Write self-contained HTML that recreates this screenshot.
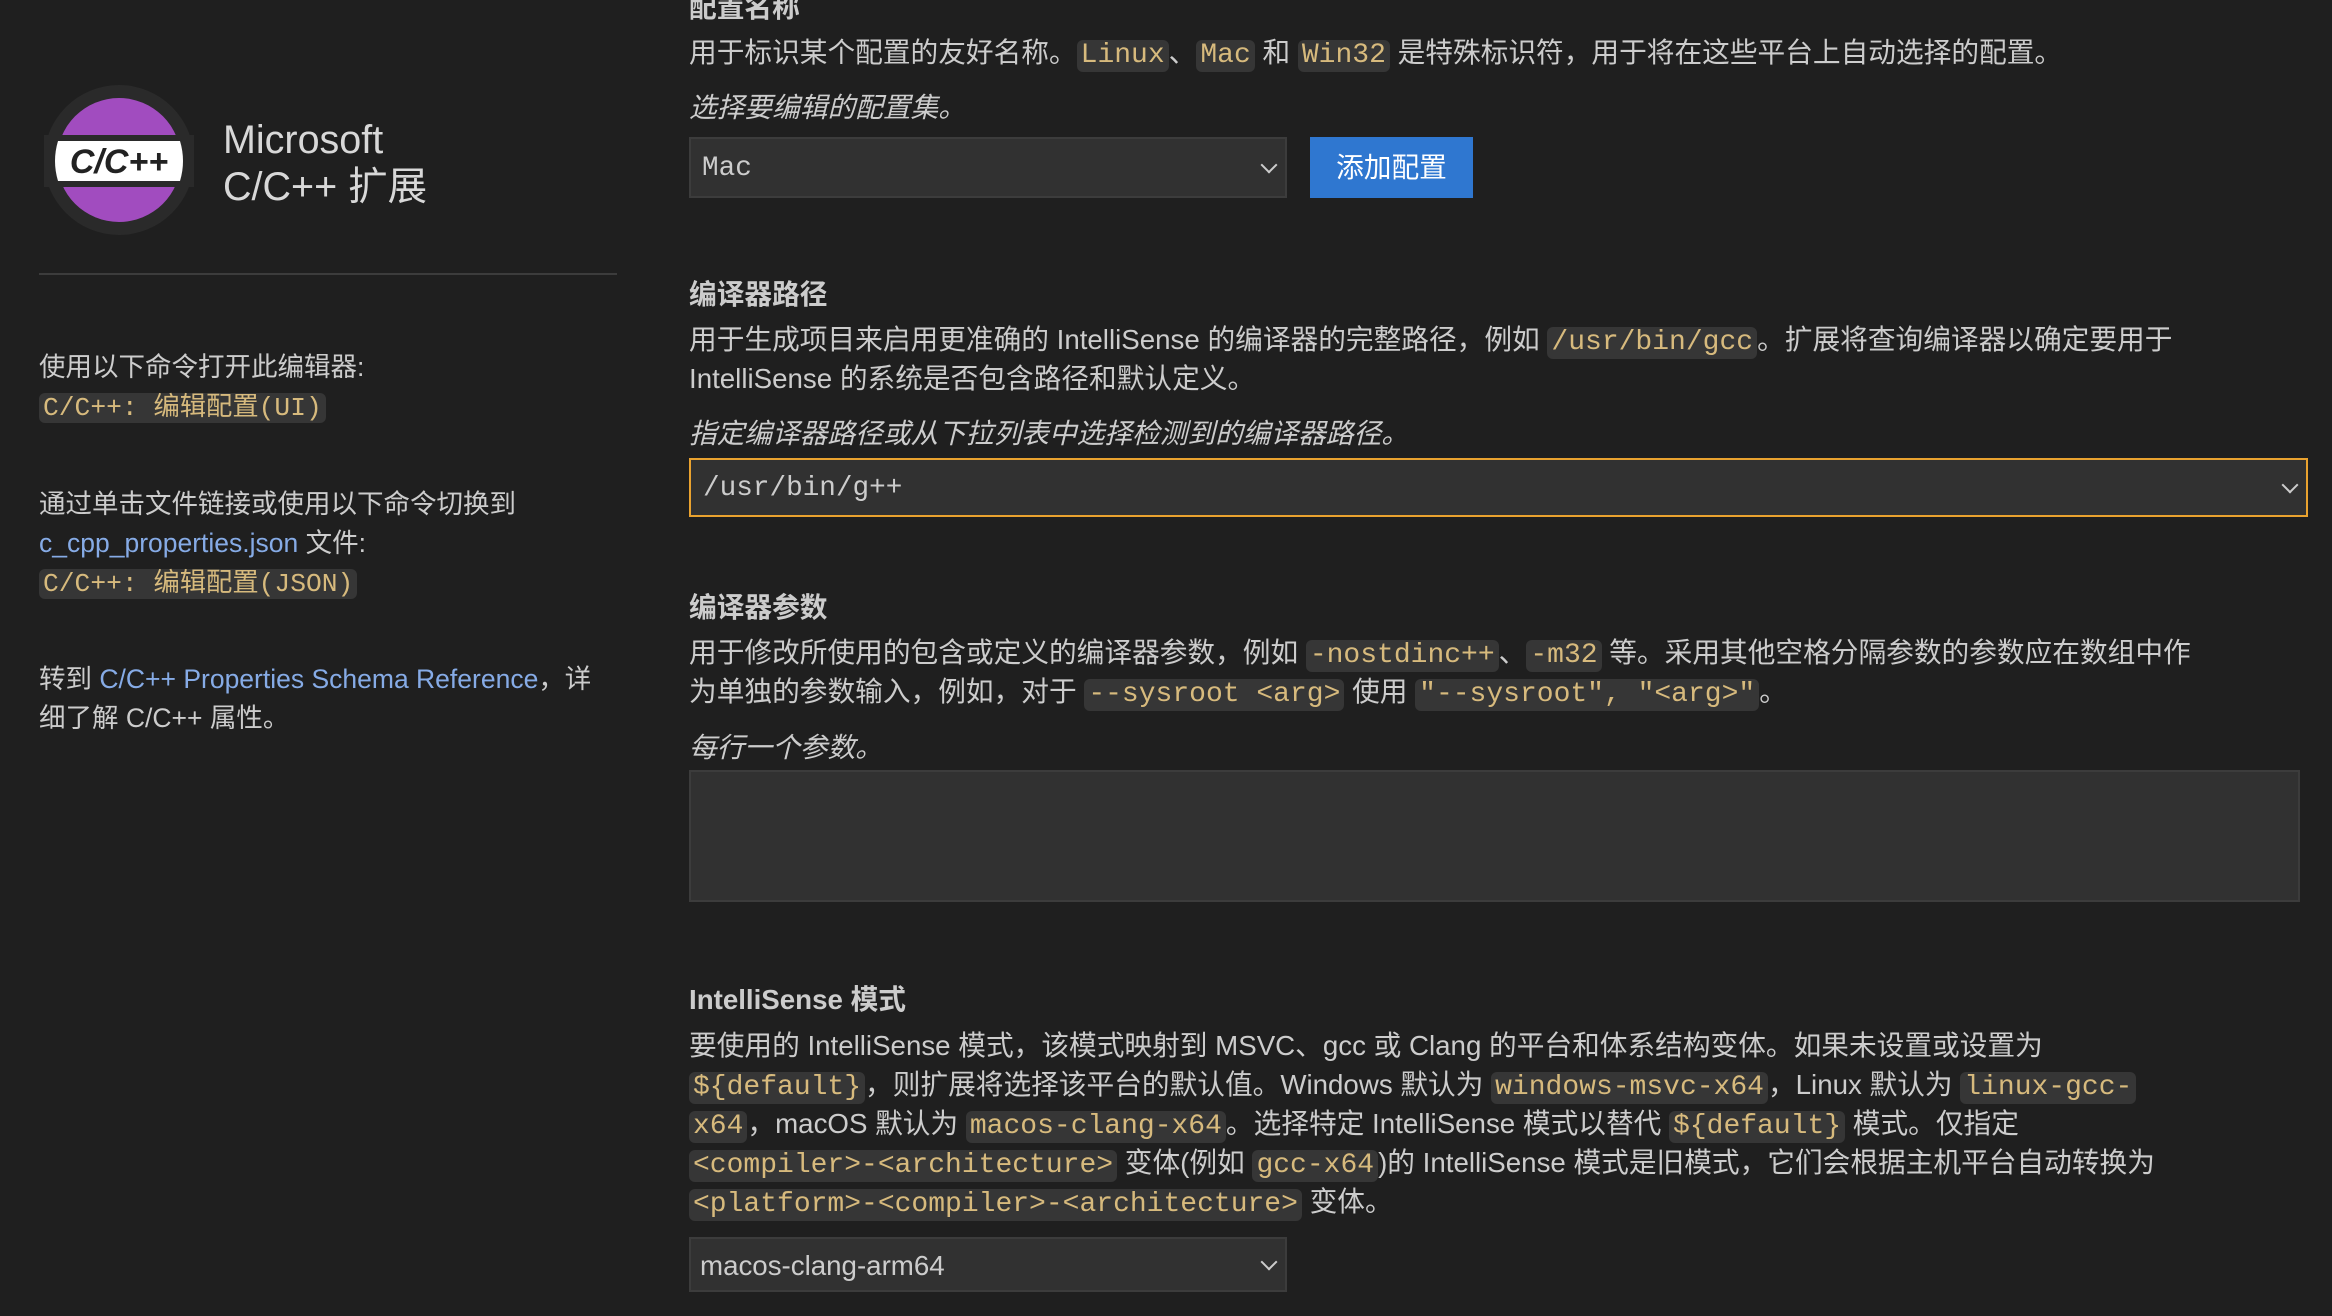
<!DOCTYPE html>
<html><head><meta charset="utf-8"><style>
*{margin:0;padding:0;box-sizing:border-box}
body{width:2332px;height:1316px;background:#1f1f1f;color:#cccccc;font-family:"Liberation Sans","Noto Sans CJK SC",sans-serif;font-size:27.7px;overflow:hidden;position:relative}
.a{position:absolute;white-space:nowrap;line-height:39px}
code{font-family:"Liberation Mono","Noto Sans CJK SC",monospace;font-size:28px;line-height:1;color:#d7ba7d;background:#363636;border-radius:6px;padding:2px 4px;display:inline-block}
.h{font-weight:bold;color:#cccccc}
.i{font-style:italic}
a{color:#86abe6;text-decoration:none}
.sb{font-size:26.5px}
.sb code{font-size:26.3px}
.sel{position:absolute;background:#313131;border:2px solid #3c3c3c;color:#cccccc}
.chev{position:absolute;right:10px;top:50%;width:12px;height:12px;border-right:2px solid #ccc;border-bottom:2px solid #ccc;transform:translateY(-75%) rotate(45deg)}
</style></head><body>
<svg class="a" style="left:44px;top:85px" width="150" height="150" viewBox="0 0 150 150">
<circle cx="75" cy="75" r="75" fill="#2a2a2a"/>
<circle cx="75" cy="75" r="62" fill="#a14cbf"/>
<rect x="0" y="50" width="150" height="52" fill="#2a2a2a"/>
<path d="M14 56 H136 Q142 76 136 96 H14 Q8 76 14 56Z" fill="#ffffff"/>
<text x="75" y="88" text-anchor="middle" font-family="Liberation Sans" font-weight="bold" font-size="34" fill="#222" font-style="italic">C/C++</text>
</svg>
<div class="a" style="left:223px;top:117px;font-size:39.5px;line-height:47px;color:#d8d8d8">Microsoft<br>C/C++ 扩展</div>
<div class="a" style="left:39px;top:273px;width:578px;height:2px;background:#3c3c3c"></div>
<div class="a sb" style="left:39px;top:348px">使用以下命令打开此编辑器:<br><code>C/C++: 编辑配置(UI)</code></div>
<div class="a sb" style="left:39px;top:485px">通过单击文件链接或使用以下命令切换到<br><a>c_cpp_properties.json</a> 文件:<br><code>C/C++: 编辑配置(JSON)</code></div>
<div class="a sb" style="left:39px;top:660px">转到 <a>C/C++ Properties Schema Reference</a>，详<br>细了解 C/C++ 属性。</div>

<div class="a h" style="left:689px;top:-12px">配置名称</div>
<div class="a" style="left:689px;top:33px">用于标识某个配置的友好名称。<code>Linux</code>、<code>Mac</code> 和 <code>Win32</code> 是特殊标识符，用于将在这些平台上自动选择的配置。</div>
<div class="a i" style="left:689px;top:88px">选择要编辑的配置集。</div>
<div class="sel" style="left:689px;top:137px;width:598px;height:61px"><span class="a" style="left:11px;top:10px;font-family:'Liberation Mono',monospace">Mac</span><div class="chev"></div></div>
<div class="a" style="left:1310px;top:137px;width:163px;height:61px;background:#2f77d0;color:#fff;text-align:center;line-height:61px">添加配置</div>

<div class="a h" style="left:689px;top:275px">编译器路径</div>
<div class="a" style="left:689px;top:320px">用于生成项目来启用更准确的 IntelliSense 的编译器的完整路径，例如 <code>/usr/bin/gcc</code>。扩展将查询编译器以确定要用于<br>IntelliSense 的系统是否包含路径和默认定义。</div>
<div class="a i" style="left:689px;top:414px">指定编译器路径或从下拉列表中选择检测到的编译器路径。</div>
<div class="sel" style="left:689px;top:458px;width:1619px;height:59px;border-color:#e9a22f"><span class="a" style="left:12px;top:9px;font-family:'Liberation Mono',monospace">/usr/bin/g++</span><div class="chev"></div></div>

<div class="a h" style="left:689px;top:588px">编译器参数</div>
<div class="a" style="left:689px;top:633px">用于修改所使用的包含或定义的编译器参数，例如 <code>-nostdinc++</code>、<code>-m32</code> 等。采用其他空格分隔参数的参数应在数组中作<br>为单独的参数输入，例如，对于 <code>--sysroot &lt;arg&gt;</code> 使用 <code>"--sysroot", "&lt;arg&gt;"</code>。</div>
<div class="a i" style="left:689px;top:728px">每行一个参数。</div>
<div class="sel" style="left:689px;top:770px;width:1611px;height:132px"></div>

<div class="a h" style="left:689px;top:980px">IntelliSense 模式</div>
<div class="a" style="left:689px;top:1026px">要使用的 IntelliSense 模式，该模式映射到 MSVC、gcc 或 Clang 的平台和体系结构变体。如果未设置或设置为<br><code>${default}</code>，则扩展将选择该平台的默认值。Windows 默认为 <code>windows-msvc-x64</code>，Linux 默认为 <code>linux-gcc-</code><br><code>x64</code>，macOS 默认为 <code>macos-clang-x64</code>。选择特定 IntelliSense 模式以替代 <code>${default}</code> 模式。仅指定<br><code>&lt;compiler&gt;-&lt;architecture&gt;</code> 变体(例如 <code>gcc-x64</code>)的 IntelliSense 模式是旧模式，它们会根据主机平台自动转换为<br><code>&lt;platform&gt;-&lt;compiler&gt;-&lt;architecture&gt;</code> 变体。</div>
<div class="sel" style="left:689px;top:1237px;width:598px;height:55px"><span class="a" style="left:9px;top:7px">macos-clang-arm64</span><div class="chev"></div></div>
</body></html>
